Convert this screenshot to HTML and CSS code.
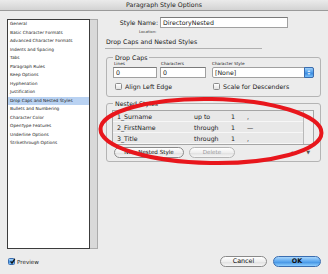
FILE: index.html
```html
<!DOCTYPE html>
<html>
<head>
<meta charset="utf-8">
<link rel="stylesheet" href="styles.css">
</head>
<body>
<div class="window">
  <div class="titlebar">Paragraph Style Options</div>
  <div class="content">
    <div class="sidebar">
      <ul class="list">
        <li>General</li>
        <li>Basic Character Formats</li>
        <li>Advanced Character Formats</li>
        <li>Indents and Spacing</li>
        <li>Tabs</li>
        <li>Paragraph Rules</li>
        <li>Keep Options</li>
        <li>Hyphenation</li>
        <li>Justification</li>
        <li class="selected">Drop Caps and Nested Styles</li>
        <li>Bullets and Numbering</li>
        <li>Character Color</li>
        <li>OpenType Features</li>
        <li>Underline Options</li>
        <li>Strikethrough Options</li>
      </ul>
      <div class="track"></div>
    </div>
    <div class="panel">
      <div class="name-row">
        <span class="name-label">Style Name:</span>
        <div class="textbox name-box">DirectoryNested</div>
      </div>
      <div class="location">Location:</div>
      <div class="section-title">Drop Caps and Nested Styles</div>
      <div class="group dropcaps">
        <div class="group-title">Drop Caps</div>
        <div class="fields">
          <div class="field f-lines"><div class="small">Lines</div><div class="textbox">0</div></div>
          <div class="field f-chars"><div class="small">Characters</div><div class="textbox">0</div></div>
          <div class="field f-style"><div class="small">Character Style</div>
            <div class="select"><span>[None]</span>
              <span class="stepper"><svg width="10" height="9" viewBox="0 0 10 9"><path d="M3 3.6 L5 1.6 L7 3.6 Z M3 5.4 L5 7.4 L7 5.4 Z" fill="#fff"/></svg></span>
            </div>
          </div>
        </div>
        <div class="checks">
          <div class="check c-align"><span class="box"></span>Align Left Edge</div>
          <div class="check"><span class="box"></span>Scale for Descenders</div>
        </div>
      </div>
      <div class="group nested">
        <div class="group-title">Nested Styles</div>
        <div class="table">
          <div class="rows">
            <div class="row"><span>1_Surname</span><span>up to</span><span>1</span><span>,</span></div>
            <div class="row"><span>2_FirstName</span><span>through</span><span>1</span><span>—</span></div>
            <div class="row"><span>3_Title</span><span>through</span><span>1</span><span>,</span></div>
          </div>
          <div class="vscroll"></div>
        </div>
        <div class="btn-row">
          <div class="pill new">New Nested Style</div>
          <div class="pill del">Delete</div>
          <div class="arrows"><span class="up">▲</span><span class="down">▼</span></div>
        </div>
      </div>
    </div>
  </div>
  <div class="footer">
    <div class="preview"><span class="box checked"><svg width="7" height="7" viewBox="0 0 7 7"><path d="M1.6 3.4 L3 5.2 L5.8 0.8" fill="none" stroke="#111" stroke-width="1.3"/></svg></span>Preview</div>
    <div class="actions">
      <div class="pill cancel">Cancel</div>
      <div class="pill ok">OK</div>
    </div>
  </div>
  <svg class="annotation" width="328" height="274" viewBox="0 0 328 274">
    <ellipse cx="211" cy="131" rx="110.5" ry="32" fill="none" stroke="#e8161c" stroke-width="4" transform="rotate(1 211 131)"/>
  </svg>
</div>
</body>
</html>
```

FILE: styles.css
```css
* { box-sizing: border-box; margin: 0; padding: 0; }
body { margin: 0; background: #ececec; font-family: "DejaVu Sans", sans-serif; color: #1a1a1a; }
.window { position: relative; width: 328px; height: 274px; background: #ececec; overflow: hidden; }
.titlebar { height: 11px; line-height: 10px; border-bottom: 1px solid #9a9a9a; background: linear-gradient(#ebebeb, #d3d3d3); text-align: center; font-size: 6.25px; color: #222; }
.content { display: flex; height: 244px; padding-left: 7px; }
.sidebar { display: flex; margin-top: 8px; height: 230px; }
.list { list-style: none; width: 83px; background: #fff; border: 1px solid #3c3c3c; }
.list li { height: 8.5px; line-height: 8.5px; font-size: 4.3px; padding-left: 2px; white-space: nowrap; color: #222; }
.list li.selected { background: #b9d2f2; }
.track { width: 8px; background: #d9d9d9; border: 1px solid #ababab; border-left: none; }
.panel { margin-left: 8px; margin-top: 6px; width: 215px; display: flex; flex-direction: column; }
.name-row { display: flex; height: 11px; align-items: center; }
.name-label { width: 52px; text-align: right; font-size: 6.25px; }
.textbox { background: #fff; border: 1px solid #a0a0a0; border-top-color: #7a7a7a; height: 11px; font-size: 6.25px; line-height: 9px; padding-left: 2px; white-space: nowrap; }
.name-box { width: 128px; margin-left: 2px; }
.location { height: 7px; font-size: 3.8px; line-height: 7px; padding-left: 33px; color: #333; }
.section-title { margin-left: -1px; width: 157px; height: 14px; line-height: 13px; font-size: 6.25px; padding-left: 1px; border-bottom: 1px solid #b0b0b0; }
.group { border: 1px solid #b4b4b4; border-radius: 3px; }
.group-title { width: max-content; margin: -5px 0 0 6px; padding: 0 2px; height: 9px; line-height: 9px; font-size: 6.25px; background: #ececec; }
.dropcaps { margin-top: 8px; padding-bottom: 6px; }
.fields { display: flex; margin-top: -1px; padding-left: 6px; }
.small { height: 5px; line-height: 5px; font-size: 4.2px; color: #222; white-space: nowrap; }
.field .textbox, .field .select { margin-top: 1px; }
.f-lines { width: 44px; }
.f-lines .small, .f-chars .small { padding-left: 1px; }
.f-chars { width: 46px; margin-left: 3px; }
.f-style { width: 102px; margin-left: 6px; }
.select { display: flex; justify-content: space-between; height: 11px; background: #fff; border: 1px solid #a0a0a0; border-radius: 2px; font-size: 6.25px; line-height: 9px; padding-left: 2px; }
.stepper { display: flex; align-items: center; width: 10px; margin: -1px -1px -1px 0; border-radius: 0 2px 2px 0; background: linear-gradient(#9fd0fa, #4b9ae8 50%, #2f7fd9 51%, #79c1fa); border: 1px solid #3a6db0; }
.checks { display: flex; margin-top: 4px; height: 8px; padding-left: 8px; }
.check { display: flex; align-items: center; font-size: 6.25px; white-space: nowrap; }
.c-align { width: 98px; }
.box { display: inline-block; width: 7px; height: 7px; border: 1px solid #8c8c8c; border-radius: 1.5px; background: linear-gradient(#ffffff, #e2e2e2); margin-right: 3px; flex: none; }
.nested { margin-top: 6px; padding-bottom: 3px; }
.table { display: flex; margin: 2px 0 0 5px; width: 202px; height: 35px; border: 1px solid #a5a5a5; background: #e8e8e8; }
.rows { flex: 1; }
.row { display: grid; grid-template-columns: 77px 37px 16px 1fr; height: 11px; line-height: 11px; padding-left: 4px; font-size: 6.25px; border-bottom: 1px solid #f7f7f7; }
.vscroll { width: 10px; border-left: 1px solid #b9b9b9; background: #efefef; }
.btn-row { display: flex; align-items: center; margin-top: 2px; height: 11px; padding-left: 7px; padding-right: 10px; }
.pill { height: 11px; border: 1px solid #8a8a8a; border-radius: 6px; background: linear-gradient(#ffffff, #eeeeee 50%, #dedede 51%, #f6f6f6); font-size: 5.6px; line-height: 9px; text-align: center; white-space: nowrap; color: #111; }
.new { width: 70px; }
.del { width: 46px; margin-left: 5px; color: #9a9a9a; border-color: #b5b5b5; }
.arrows { margin-left: auto; display: flex; font-size: 5px; line-height: 11px; }
.arrows .up { color: #9a9a9a; margin-right: 12px; }
.arrows .down { color: #555; }
.footer { display: flex; align-items: center; justify-content: space-between; height: 13px; padding: 0 7px 0 8px; }
.preview { display: flex; align-items: center; font-size: 5.6px; }
.preview .box { margin-right: 2px; }
.box.checked { background: linear-gradient(#a9d6fc, #4f9de9 50%, #3584db 51%, #86c8fb); border-color: #3a6db0; }
.box.checked svg { display: block; margin: -1px 0 0 -0.5px; }
.actions { display: flex; }
.cancel { width: 47px; font-size: 6.4px; }
.ok { width: 48px; margin-left: 6px; font-size: 6.4px; font-weight: bold; background: linear-gradient(#a9d6fc, #5aa6ee 50%, #3a8be0 51%, #8fd0ff); border-color: #3a6db0; }
.annotation { position: absolute; left: 0; top: 0; pointer-events: none; }
```
